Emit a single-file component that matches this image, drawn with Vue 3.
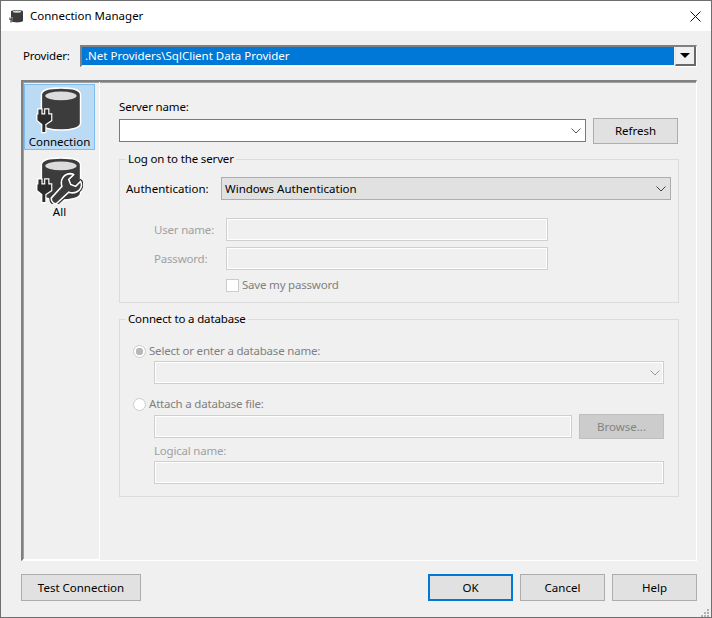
<template>
  <div class="dialog">
    <div class="titlebar">
      <svg class="title-icon" width="16" height="16" viewBox="0 0 16 16">
        <path d="M3 3.5C3 1.5 15 1.5 15 3.5V12.5C15 15 3 15 3 12.5Z" fill="#3c3c3c" />
        <ellipse cx="9" cy="3.6" rx="4.2" ry="1.2" fill="#d8d8d8" />
        <path d="M1.5 9.5h1v2h1v-2h1v2.5h-1v2.5h-1V12h-1Z" fill="#222" stroke="#fff" stroke-width=".6" paint-order="stroke" />
      </svg>
      <span class="title-text">Connection Manager</span>
      <svg class="close-icon" width="11" height="11" viewBox="0 0 11 11">
        <path d="M.5 .5L10.5 10.5M10.5 .5L.5 10.5" stroke="#111" stroke-width="1" fill="none" />
      </svg>
    </div>

    <div class="provider-row">
      <label class="provider-label">Provider:</label>
      <div class="provider-combo">
        <div class="provider-value">.Net Providers\SqlClient Data Provider</div>
        <div class="provider-arrow"><i></i></div>
      </div>
    </div>

    <div class="panel">
      <div class="sidebar">
        <div class="side-item active">
          <svg width="48" height="48" viewBox="0 0 48 48">
            <path d="M6 8C6 2 15 1 26 1S46 2 46 8V37C46 42 36 44 26 44S6 42 6 37Z" fill="#3c3c3c" stroke="#fff" stroke-width="1.5" />
            <ellipse cx="26" cy="9" rx="16" ry="4.5" fill="#dcdcdc" />
            <path d="M3 23h3v5h4v-5h3v5h3v6l-6 4v8H7v-8l-5-4v-6h1Z" fill="#2c2c2c" stroke="#fff" stroke-width="2.4" paint-order="stroke" />
          </svg>
          <span>Connection</span>
        </div>
        <div class="side-item">
          <svg width="48" height="48" viewBox="0 0 48 48">
            <path d="M6 8C6 2 15 1 26 1S46 2 46 8V37C46 42 36 44 26 44S6 42 6 37Z" fill="#3c3c3c" stroke="#fff" stroke-width="1.5" />
            <ellipse cx="26" cy="9" rx="16" ry="4.5" fill="#dcdcdc" />
            <path d="M3 23h3v5h4v-5h3v5h3v6l-6 4v8H7v-8l-5-4v-6h1Z" fill="#2c2c2c" stroke="#fff" stroke-width="2.4" paint-order="stroke" />
            <path d="M16 42L27 30C25 24 28 18 35 17C37 17 38 17 39 18L34 23L36 28L41 30L46 25C47 26 47 28 47 29C46 35 40 38 34 36L22 47C20 49 16 46 16 42Z" fill="none" stroke="#333" stroke-width="4" />
            <path d="M16 42L27 30C25 24 28 18 35 17C37 17 38 17 39 18L34 23L36 28L41 30L46 25C47 26 47 28 47 29C46 35 40 38 34 36L22 47C20 49 16 46 16 42Z" fill="#3c3c3c" stroke="#fff" stroke-width="1.6" />
          </svg>
          <span>All</span>
        </div>
      </div>

      <div class="content">
        <label class="field-label">Server name:</label>
        <div class="server-row">
          <div class="server-input">
            <svg class="chev" width="10" height="6" viewBox="0 0 10 6"><path d="M.5 .5L5 5L9.5 .5" fill="none" stroke="#555" /></svg>
          </div>
          <button class="btn refresh">Refresh</button>
        </div>

        <fieldset class="group logon">
          <legend>Log on to the server</legend>
          <div class="auth-row">
            <label>Authentication:</label>
            <div class="auth-select">
              <span>Windows Authentication</span>
              <svg class="chev" width="10" height="6" viewBox="0 0 10 6"><path d="M.5 .5L5 5L9.5 .5" fill="none" stroke="#444" /></svg>
            </div>
          </div>
          <div class="cred-row">
            <label class="faint">User name:</label>
            <div class="input-off"></div>
          </div>
          <div class="cred-row">
            <label class="faint">Password:</label>
            <div class="input-off"></div>
          </div>
          <div class="save-row">
            <span class="check"></span>
            <span class="muted">Save my password</span>
          </div>
        </fieldset>

        <fieldset class="group database">
          <legend>Connect to a database</legend>
          <div class="radio-row first">
            <span class="radio on"></span>
            <span class="muted">Select or enter a database name:</span>
          </div>
          <div class="input-off db-combo">
            <svg class="chev" width="10" height="6" viewBox="0 0 10 6"><path d="M.5 .5L5 5L9.5 .5" fill="none" stroke="#999" /></svg>
          </div>
          <div class="radio-row second">
            <span class="radio"></span>
            <span class="muted">Attach a database file:</span>
          </div>
          <div class="file-row">
            <div class="input-off file-input"></div>
            <button class="btn browse">Browse...</button>
          </div>
          <div class="logical-label faint">Logical name:</div>
          <div class="input-off logical"></div>
        </fieldset>
      </div>
    </div>

    <div class="footer">
      <button class="btn test">Test Connection</button>
      <div class="footer-right">
        <button class="btn ok">OK</button>
        <button class="btn">Cancel</button>
        <button class="btn">Help</button>
      </div>
      <svg class="grip" width="8" height="8" viewBox="0 0 8 8" fill="#b0b0b0">
        <rect x="6" y="0" width="2" height="2" />
        <rect x="3" y="3" width="2" height="2" /><rect x="6" y="3" width="2" height="2" />
        <rect x="0" y="6" width="2" height="2" /><rect x="3" y="6" width="2" height="2" /><rect x="6" y="6" width="2" height="2" />
      </svg>
    </div>
  </div>
</template>

<script setup>
</script>

<style>
html, body { margin: 0; background: #f0f0f0; }
</style>

<style scoped>
.dialog {
  width: 712px; height: 618px; box-sizing: border-box;
  display: flex; flex-direction: column;
  background: #f0f0f0; color: #000;
  border: 1px solid #6e6e6e;
  font-family: "Noto Sans", sans-serif; font-size: 11.5px; line-height: 16px;
  overflow: hidden;
}
.titlebar {
  height: 30px; flex: none; background: #fff;
  display: flex; align-items: center; padding: 0 10px 0 7px;
}
.title-icon { margin-right: 6px; }
.title-text { flex: 1; }

.provider-row { display: flex; align-items: center; height: 22px; margin: 14px 14px 0 22px; }
.provider-label { width: 57px; letter-spacing: -.2px; }
.provider-combo {
  flex: 1; height: 22px; box-sizing: border-box; display: flex;
  border-top: 2px solid #808080; border-left: 2px solid #808080;
  border-right: 1px solid #fff; border-bottom: 1px solid #fff;
}
.provider-value { flex: 1; background: #0078d7; color: #fff; padding-left: 3px; line-height: 18px; margin-bottom: 1px; }
.provider-arrow {
  width: 18px; margin-left: 1px; background: #f0f0f0; display: flex; align-items: center; justify-content: center;
  border-right: 2px solid #696969; border-bottom: 2px solid #696969; border-left: 1px solid #e3e3e3;
}
.provider-arrow i { width: 0; height: 0; border: 5px solid transparent; border-top: 5px solid #000; border-bottom: 0; }

.panel {
  flex: none; height: 481px; margin: 13px 14px 0 20px; box-sizing: border-box; display: flex;
  border-top: 2px solid #808080; border-left: 2px solid #808080;
  border-right: 1px solid #fff; border-bottom: 1px solid #fff;
  box-shadow: inset 1px 1px 0 #a0a0a0;
}
.sidebar {
  width: 77px; flex: none; box-sizing: border-box; border-right: 1px solid #fff; border-bottom: 1px solid #fff;
  padding: 2px 4px 0 1px; display: flex; flex-direction: column; gap: 4px;
}
.side-item {
  height: 66px; box-sizing: border-box; border: 1px solid transparent;
  display: flex; flex-direction: column; align-items: center; padding-top: 2px; line-height: 14px;
}
.side-item span { margin-top: 1px; }
.side-item.active { background: #bbdaf3; border-color: #7dbdf0; }
.side-item svg { display: block; margin-left: -1px; }
.content { flex: 1; padding: 17px 16px 0 19px; min-width: 0; }

.field-label { display: block; height: 16px; letter-spacing: -.15px; }
.server-row { display: flex; align-items: flex-start; margin-top: 3px; }
.server-input {
  width: 467px; height: 23px; box-sizing: border-box; margin-top: 1px; background: #fff; border: 1px solid #7a7a7a;
  position: relative;
}
.chev { position: absolute; right: 4px; top: 8px; }
.btn {
  width: 85px; height: 27px; box-sizing: border-box; padding: 0; flex: none;
  background: #e1e1e1; border: 1px solid #adadad; color: #000;
  font: inherit; text-align: center;
}
.refresh { margin-left: 7px; height: 26px; }

.group {
  margin: 0; padding: 0; min-width: 0; box-sizing: border-box; width: 560px;
  border: 1px solid #dcdcdc;
}
.group legend { margin-left: 6px; padding: 0 2px; line-height: 14px; height: 14px; letter-spacing: -.15px; }
.logon { margin-top: 8px; height: 151px; }
.database { margin-top: 9px; height: 185px; }

.auth-row { display: flex; align-items: center; margin: 11px 7px 0 6px; height: 23px; }
.auth-row label { width: 95px; }
.auth-select {
  flex: 1; height: 23px; box-sizing: border-box; background: #e1e1e1; border: 1px solid #adadad;
  padding-left: 3px; line-height: 21px; position: relative;
}
.cred-row { display: flex; align-items: center; margin: 6px 130px 0 34px; height: 23px; }
.auth-row + .cred-row { margin-top: 18px; }
.cred-row label { width: 72px; flex: none; }
.muted { color: #808080; letter-spacing: -.2px; }
.faint { color: #a0a0a0; letter-spacing: -.2px; }
.input-off {
  flex: 1; height: 23px; box-sizing: border-box; position: relative;
  border: 1px solid #cfcfcf; box-shadow: inset 0 0 0 1px #fff; background: #f0f0f0;
}
.save-row { display: flex; align-items: center; margin: 7px 0 0 106px; height: 16px; }
.check { width: 13px; height: 13px; box-sizing: border-box; background: #fff; border: 1px solid #ccc; margin-right: 3px; }

.radio-row { display: flex; align-items: center; height: 16px; margin-left: 13px; }
.radio-row.first { margin-top: 17px; }
.radio-row.second { margin-top: 12px; }
.radio {
  width: 13px; height: 13px; box-sizing: border-box; border-radius: 50%; background: #fff; border: 1px solid #ccc; margin-right: 3px;
}
.radio.on { background: radial-gradient(circle, #b8b8b8 3.5px, #fff 4px); }
.db-combo { margin: 2px 14px 0 34px; }
.db-combo .chev { right: 3px; top: 8px; }
.file-row { display: flex; align-items: center; margin: 2px 14px 0 34px; height: 25px; }
.file-input { flex: none; width: 418px; }
.browse { margin-left: 7px; height: 25px; background: #ccc; border-color: #bfbfbf; color: #838383; }
.logical-label { margin: 4px 0 0 34px; }
.logical { margin: 2px 14px 0 34px; }

.footer { position: relative; flex: 1; display: flex; justify-content: space-between; align-items: flex-start; padding: 13px 14px 0 20px; }
.test { width: 120px; }
.footer-right { display: flex; gap: 7px; }
.ok { border: 2px solid #0078d7; }
.grip { position: absolute; right: 2px; bottom: 0; }
</style>
